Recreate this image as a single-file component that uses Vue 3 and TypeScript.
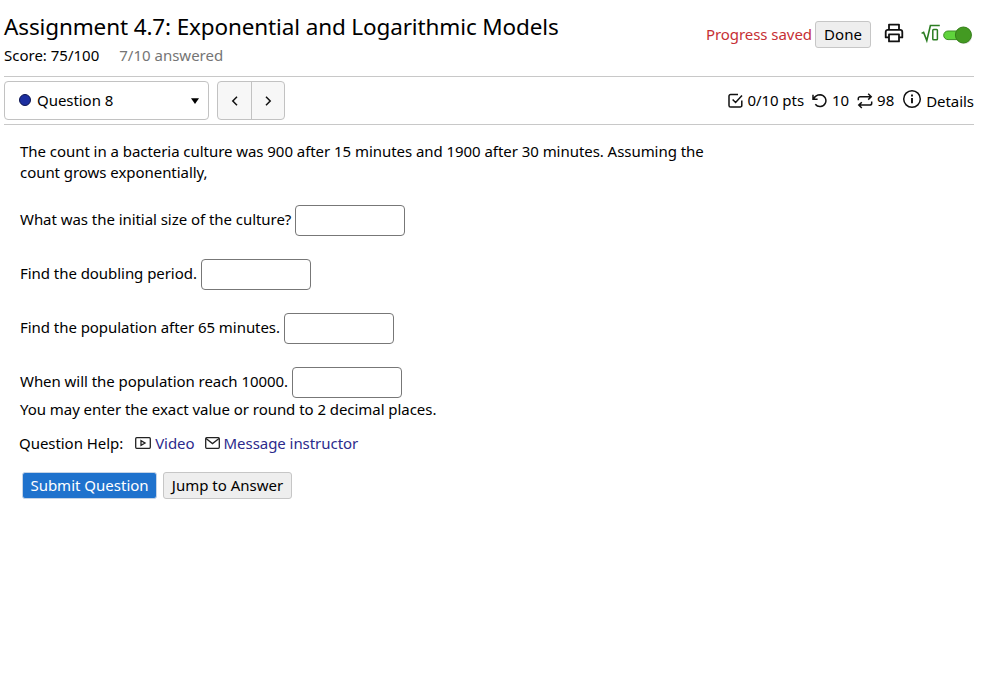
<script setup lang="ts">
import { ref } from 'vue'

interface Part {
  label: string
  answer: string
}

const showMath = ref(true)
const parts = ref<Part[]>([
  { label: 'What was the initial size of the culture?', answer: '' },
  { label: 'Find the doubling period.', answer: '' },
  { label: 'Find the population after 65 minutes.', answer: '' },
  { label: 'When will the population reach 10000.', answer: '' },
])
</script>

<template>
  <div class="page">
    <header class="header">
      <div class="heading">
        <h1>Assignment 4.7: Exponential and Logarithmic Models</h1>
        <div class="score">
          <span>Score: 75/100</span>
          <span class="answered">7/10 answered</span>
        </div>
      </div>
      <div class="tools">
        <span class="saved">Progress saved</span>
        <button class="btn done">Done</button>
        <svg class="printer" width="20" height="20" viewBox="0 0 20 20" fill="none" stroke="#111" stroke-width="1.8" stroke-linejoin="round">
          <path d="M5 6.6V1.6h10v5M5 14.4H1.7V9a2.2 2.2 0 0 1 2.2-2.2h12.2A2.2 2.2 0 0 1 18.3 9v5.4H15" />
          <path d="M5 11.4h10v7H5z" />
        </svg>
        <button class="math" aria-label="Toggle math entry" @click="showMath = !showMath">
          <svg width="52" height="24" viewBox="0 0 52 24" fill="none">
            <path d="M.6 10.4l2-1 3.2 8.2L9.4 2.5h9.4" stroke="#2b7d22" stroke-width="1.6" />
            <rect x="11.8" y="6.5" width="4.6" height="10.2" rx=".8" stroke="#2b7d22" stroke-width="1.5" />
            <rect x="22.7" y="8" width="20" height="8.6" rx="4.3" fill="#5fd33c" stroke="#3c8f24" />
            <circle cx="43.2" cy="13" r="8" fill="#000" opacity=".13" />
            <circle cx="42.4" cy="12" r="8" fill="#439a22" stroke="#348018" />
          </svg>
        </button>
      </div>
    </header>

    <nav class="bar">
      <button class="picker">
        <span class="dot"></span>
        <span class="name">Question 8</span>
        <svg width="8" height="6" viewBox="0 0 8 6"><path d="M0 .3h8L4 6z" fill="#000" /></svg>
      </button>
      <div class="pager">
        <button aria-label="Previous question">
          <svg width="8" height="10" viewBox="0 0 8 10"><path d="M6 .8L1.8 5 6 9.2" /></svg>
        </button>
        <button aria-label="Next question">
          <svg width="8" height="10" viewBox="0 0 8 10"><path d="M2 .8L6.2 5 2 9.2" /></svg>
        </button>
      </div>
      <div class="stats">
        <svg class="i-check" width="15" height="15" viewBox="0 0 15 15">
          <path d="M10 1.5H2.6A1.6 1.6 0 0 0 1 3.1v9.3A1.6 1.6 0 0 0 2.6 14h9.6a1.6 1.6 0 0 0 1.6-1.6V7.5M4.6 6.5l3 3L14 2.4" />
        </svg>
        <span class="pts">0/10 pts</span>
        <svg class="i-undo" width="15" height="15" viewBox="0 0 15 15">
          <path d="M1 1.8v4.4h4.6M1.5 6C3 3 5.4 1.8 8.2 1.8a5.9 5.9 0 1 1-4.9 9.5" />
        </svg>
        <span class="tries">10</span>
        <svg class="i-loop" width="16" height="16" viewBox="0 0 16 16">
          <path d="M1.3 7.2V5.6A1.9 1.9 0 0 1 3.2 3.7H14M11.2 .8L14.2 3.7l-3 2.9M14.7 8.6v1.6a1.9 1.9 0 0 1-1.9 1.9H2M4.8 9.2L1.8 12.1l3 2.9" />
        </svg>
        <span class="versions">98</span>
        <svg class="i-info" width="20" height="20" viewBox="0 0 20 20">
          <circle cx="10" cy="10" r="8.3" /><path class="stem" d="M10 9v5.3M10 5.6v1.9" />
        </svg>
        <span class="details">Details</span>
      </div>
    </nav>

    <main class="question">
      <p class="intro">
        The count in a bacteria culture was 900 after 15 minutes and 1900 after 30 minutes. Assuming the<br />count grows exponentially,
      </p>
      <div class="parts">
        <label v-for="part in parts" :key="part.label" class="part">
          <span>{{ part.label }}</span>
          <input v-model="part.answer" type="text" />
        </label>
      </div>
      <p class="note">You may enter the exact value or round to 2 decimal places.</p>
      <div class="help">
        <span class="help-label">Question Help:</span>
        <a class="video">
          <svg width="16" height="12" viewBox="0 0 16 12"><rect x=".7" y=".7" width="14.6" height="10.6" rx="1" /><path d="M6 3.7v4.6L10 6z" /></svg>
          <span>Video</span>
        </a>
        <a class="message">
          <svg width="15" height="12" viewBox="0 0 15 12"><rect x=".7" y=".7" width="13.6" height="10.6" rx="1" /><path d="M1 1.6l6.5 5L14 1.6" /></svg>
          <span>Message instructor</span>
        </a>
      </div>
      <div class="actions">
        <button class="btn submit">Submit Question</button>
        <button class="btn jump">Jump to Answer</button>
      </div>
    </main>
  </div>
</template>

<style>
body {
  background: #fff;
}
</style>

<style scoped>
.page {
  box-sizing: border-box;
  width: 987px;
  height: 694px;
  padding: 0 13px 0 4px;
  overflow: hidden;
  font-family: "Noto Sans", "Open Sans", sans-serif;
  font-size: 15px;
  line-height: 21px;
  letter-spacing: -0.05px;
  color: #000;
}
button {
  margin: 0;
  padding: 0;
  font: inherit;
  letter-spacing: 0;
  color: #000;
  white-space: nowrap;
}
span,
label,
p,
h1 {
  white-space: nowrap;
}
.header {
  box-sizing: border-box;
  display: flex;
  justify-content: space-between;
  height: 77px;
  border-bottom: 1px solid #c8c8c8;
}
.heading {
  padding-top: 11px;
}
h1 {
  margin: 0;
  font-size: 22.5px;
  line-height: 32px;
  font-weight: 400;
  letter-spacing: -0.13px;
}
.score {
  display: flex;
  gap: 20px;
  margin-top: 2px;
  letter-spacing: 0;
}
.answered {
  color: #757575;
}
.tools {
  display: flex;
  align-items: center;
  height: 27px;
  margin-top: 21px;
}
.saved {
  margin-right: 3px;
  color: #c62f35;
}
.btn {
  box-sizing: border-box;
  height: 27px;
  border: 1px solid #c6c6c6;
  border-radius: 3px;
  background: #eee;
  line-height: 25px;
}
.done {
  width: 56px;
  margin-right: 13px;
}
.printer {
  margin: -3px 16px 0 0;
}
.math {
  display: flex;
  width: 54px;
  border: 0;
  background: none;
}
.math svg {
  margin-left: 1px;
}
.bar {
  box-sizing: border-box;
  display: flex;
  align-items: center;
  height: 48px;
  border-bottom: 1px solid #c8c8c8;
}
.picker {
  box-sizing: border-box;
  display: flex;
  align-items: center;
  width: 205px;
  height: 39px;
  padding: 0 9px 0 14px;
  border: 1px solid #c2c2c2;
  border-radius: 4px;
  background: #fff;
  letter-spacing: -0.05px;
}
.dot {
  box-sizing: border-box;
  width: 12px;
  height: 12px;
  margin: -1px 6px 0 0;
  border: 1px solid #0c1450;
  border-radius: 50%;
  background: #1c2fa0;
}
.name {
  flex: 1;
  text-align: left;
}
.pager {
  box-sizing: border-box;
  display: flex;
  width: 68px;
  height: 39px;
  margin-left: 8px;
  border: 1px solid #c2c2c2;
  border-radius: 4px;
  background: #f7f7f7;
}
.pager button {
  display: flex;
  width: 33px;
  align-items: center;
  justify-content: center;
  border: 0;
  background: none;
}
.pager button + button {
  border-left: 1px solid #c2c2c2;
}
.pager svg,
.stats svg {
  fill: none;
  stroke: #111;
  stroke-width: 1.5;
}
.stats .stem {
  stroke-width: 1.9;
}
.stats {
  display: flex;
  align-items: center;
  margin-left: auto;
}
.pts {
  margin: 0 8px 0 4px;
}
.tries {
  margin: 0 8px 0 5px;
}
.versions {
  margin: 0 8px 0 4px;
}
.i-info {
  margin-top: -3px;
}
.details {
  margin: 2px 0 0 4px;
}
.question {
  padding: 16px 0 0 16px;
}
.intro {
  margin: 0;
}
.parts {
  display: grid;
  gap: 23px;
  margin-top: 22px;
}
.part {
  display: flex;
  gap: 4px;
  height: 31px;
  line-height: 29px;
}
input {
  box-sizing: border-box;
  width: 110px;
  height: 31px;
  padding: 0 6px;
  border: 1px solid #777;
  border-radius: 4px;
  background: #fff;
  font: inherit;
}
.note {
  margin: 1px 0 0;
}
.help {
  display: flex;
  align-items: center;
  margin: 13px 0 0 -1px;
}
.help a {
  display: flex;
  align-items: center;
  gap: 4px;
  color: #2c2a8c;
}
.help svg {
  margin-top: -1px;
  fill: none;
  stroke: #222;
  stroke-width: 1.3;
}
.help-label {
  margin-right: 12px;
}
.video {
  margin-right: 10px;
}
.actions {
  display: flex;
  gap: 6px;
  margin: 18px 0 0 2px;
}
.submit {
  width: 135px;
  border-color: #c6d4e6;
  background: #1f72cd;
  color: #fff;
}
.jump {
  width: 129px;
}
</style>
